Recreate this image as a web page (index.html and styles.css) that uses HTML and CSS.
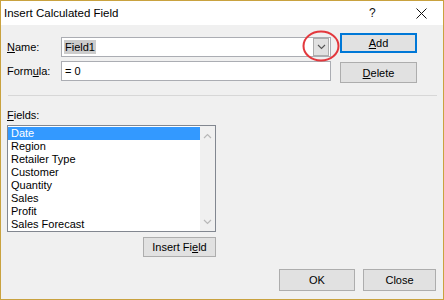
FILE: index.html
```html
<!DOCTYPE html>
<html>
<head>
<meta charset="utf-8">
<link rel="stylesheet" href="styles.css">
</head>
<body>
<div class="window">
  <div class="titlebar">
    <span class="title">Insert Calculated Field</span>
    <span class="help">?</span>
    <span class="close-x">
      <svg width="11" height="11" viewBox="0 0 11 11"><path d="M0.5 0.5 L10.5 10.5 M10.5 0.5 L0.5 10.5" stroke="#111" stroke-width="1" fill="none"/></svg>
    </span>
  </div>
  <div class="content">
    <div class="top">
      <div class="form">
        <div class="row">
          <label class="lbl"><u>N</u>ame:</label>
          <div class="input name-input">
            <span class="sel">Field1</span>
            <span class="dd">
              <svg width="9" height="6" viewBox="0 0 9 6"><path d="M1 1 L4.5 4.5 L8 1" stroke="#555" stroke-width="1.1" fill="none"/></svg>
            </span>
          </div>
        </div>
        <div class="row">
          <label class="lbl">Form<u>u</u>la:</label>
          <div class="input"><span class="val">= 0</span></div>
        </div>
      </div>
      <div class="side">
        <button class="btn btn-default"><u>A</u>dd</button>
        <button class="btn btn-delete"><u>D</u>elete</button>
      </div>
    </div>
    <div class="separator"></div>
    <div class="fields-label"><u>F</u>ields:</div>
    <div class="fields-area">
      <div class="list">
        <ul class="items">
          <li class="selected">Date</li>
          <li>Region</li>
          <li>Retailer Type</li>
          <li>Customer</li>
          <li>Quantity</li>
          <li>Sales</li>
          <li>Profit</li>
          <li>Sales Forecast</li>
        </ul>
        <div class="scrollbar">
          <svg width="9" height="6" viewBox="0 0 9 6"><path d="M1 5 L4.5 1.5 L8 5" stroke="#b8b8b8" stroke-width="1.2" fill="none"/></svg>
          <svg width="9" height="6" viewBox="0 0 9 6"><path d="M1 1 L4.5 4.5 L8 1" stroke="#b8b8b8" stroke-width="1.2" fill="none"/></svg>
        </div>
      </div>
      <div class="insert-row">
        <button class="btn btn-insert">Insert Fi<u>e</u>ld</button>
      </div>
    </div>
    <div class="footer">
      <button class="btn btn-ok">OK</button>
      <button class="btn btn-close">Close</button>
    </div>
  </div>
  <svg class="annotation" width="40" height="34" viewBox="0 0 40 34"><ellipse cx="20" cy="17" rx="17.5" ry="14.5" fill="none" stroke="#e3383d" stroke-width="2"/></svg>
</div>
</body>
</html>
```
FILE: styles.css
```css
html, body {
  margin: 0;
  padding: 0;
  background: #f0f0f0;
}
body {
  font-family: "Liberation Sans", Arial, sans-serif;
  font-size: 11px;
  color: #000;
}
.window {
  position: relative;
  width: 444px;
  height: 300px;
  box-sizing: border-box;
  border: 1px solid #c9a23f;
  background: #f0f0f0;
  display: flex;
  flex-direction: column;
}
.titlebar {
  height: 24px;
  background: #fff;
  display: flex;
  align-items: center;
  padding-left: 3px;
  font-size: 11.5px;
}
.title {
  flex: 1;
}
.help {
  width: 10px;
  font-size: 12px;
  margin-right: 37px;
  color: #111;
}
.close-x {
  display: flex;
  width: 11px;
  margin-right: 16px;
}
.content {
  flex: 1;
  display: flex;
  flex-direction: column;
}
.top {
  display: flex;
  padding-left: 6px;
  height: 58px;
}
.form {
  width: 324px;
  margin-top: 12px;
  display: flex;
  flex-direction: column;
  gap: 4px;
}
.row {
  display: flex;
  align-items: center;
  height: 20px;
}
.lbl {
  width: 54px;
}
.input {
  width: 270px;
  height: 20px;
  box-sizing: border-box;
  border: 1px solid #abadb3;
  background: #fff;
  display: flex;
  align-items: center;
  padding-left: 2px;
}
.sel {
  background: #cccccc;
  padding: 1px 1px;
  line-height: 12px;
}
.val {
  padding-left: 1px;
}
.dd {
  margin-left: auto;
  margin-right: 1px;
  width: 16px;
  height: 18px;
  box-sizing: border-box;
  border: 1px solid #adadad;
  background: #e1e1e1;
  display: flex;
  align-items: center;
  justify-content: center;
}
.side {
  margin-left: 9px;
  margin-top: 8px;
  display: flex;
  flex-direction: column;
  gap: 9px;
}
.btn {
  font-family: "Liberation Sans", Arial, sans-serif;
  font-size: 11px;
  color: #000;
  background: #e1e1e1;
  border: 1px solid #adadad;
  box-sizing: border-box;
  padding: 0;
  margin: 0;
}
.btn-default {
  width: 77px;
  height: 20px;
  border: 2px solid #0078d7;
}
.btn-delete {
  width: 77px;
  height: 21px;
}
.separator {
  margin: 12px 6px 0 7px;
  height: 1px;
  background: #d7d7d7;
}
.fields-label {
  margin-top: 13px;
  padding-left: 6px;
  line-height: 13px;
  height: 13px;
}
.fields-area {
  margin-top: 3px;
  margin-left: 6px;
  width: 209px;
}
.list {
  height: 107px;
  box-sizing: border-box;
  border: 1px solid #828790;
  background: #fff;
  display: flex;
}
.items {
  list-style: none;
  margin: 0;
  padding: 1px 0 0 0;
  width: 192px;
}
.items li {
  height: 13px;
  line-height: 13px;
  padding-left: 3px;
  white-space: nowrap;
}
.items li.selected {
  background: #3399ff;
  color: #fff;
}
.scrollbar {
  flex: 1;
  background: #f0f0f0;
  display: flex;
  flex-direction: column;
  justify-content: space-between;
  align-items: center;
  padding: 7px 0 6px 0;
}
.insert-row {
  display: flex;
  justify-content: flex-end;
  margin-top: 5px;
}
.btn-insert {
  width: 73px;
  height: 20px;
}
.footer {
  display: flex;
  justify-content: flex-end;
  gap: 8px;
  margin-top: 12px;
  padding-right: 7px;
}
.btn-ok {
  width: 76px;
  height: 22px;
}
.btn-close {
  width: 73px;
  height: 22px;
}
.annotation {
  position: absolute;
  left: 300px;
  top: 28px;
}
```
